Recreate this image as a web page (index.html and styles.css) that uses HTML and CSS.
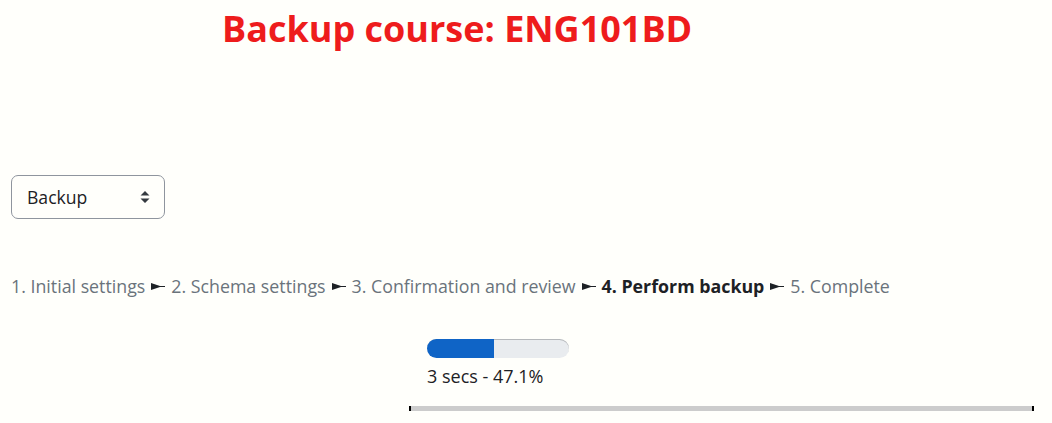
FILE: index.html
```html
<!DOCTYPE html>
<html lang="en">
<head>
<meta charset="utf-8">
<title>Backup course: ENG101BD</title>
<link rel="stylesheet" href="styles.css">
</head>
<body>
<div class="page">
  <h2 class="title">Backup course: ENG101BD</h2>
  <div class="selector">
    <div class="select">
      <span>Backup</span>
      <svg class="caret" width="10" height="14" viewBox="0 0 10 14"><path d="M5 1 L9.5 5.5 H0.5 Z M5 13 L0.5 8.5 H9.5 Z" fill="#343a40"/></svg>
    </div>
  </div>
  <div class="steps">
    <span class="step">1. Initial settings</span>
    <svg class="sep" width="14" height="7" viewBox="0 0 14 7"><path d="M0 0 L9 3 H14 V4 H9 L0 7 Z" fill="#1d2125"/></svg>
    <span class="step">2. Schema settings</span>
    <svg class="sep" width="14" height="7" viewBox="0 0 14 7"><path d="M0 0 L9 3 H14 V4 H9 L0 7 Z" fill="#1d2125"/></svg>
    <span class="step">3. Confirmation and review</span>
    <svg class="sep" width="14" height="7" viewBox="0 0 14 7"><path d="M0 0 L9 3 H14 V4 H9 L0 7 Z" fill="#1d2125"/></svg>
    <span class="step current">4. Perform backup</span>
    <svg class="sep" width="14" height="7" viewBox="0 0 14 7"><path d="M0 0 L9 3 H14 V4 H9 L0 7 Z" fill="#1d2125"/></svg>
    <span class="step">5. Complete</span>
  </div>
  <div class="progress-area">
    <div class="progress"><div class="fill" style="width:47.1%"></div></div>
    <div class="status">3 secs - 47.1%</div>
  </div>
  <div class="rule-wrap"><div class="rule"></div></div>
</div>
</body>
</html>
```
FILE: styles.css
```css
html, body {
  margin: 0;
  padding: 0;
  background: #fffffb;
}
body {
  font-family: "Open Sans", "Noto Sans", sans-serif;
  color: #1d2125;
}
.page {
  padding: 0 0 0 11px;
}
.title {
  margin: 0;
  padding: 4px 0 0 211px;
  font-size: 36px;
  line-height: 50px;
  font-weight: 700;
  color: #ee1c1c;
}
.selector {
  margin-top: 121px;
}
.select {
  box-sizing: border-box;
  width: 154px;
  height: 44px;
  border: 1px solid #8f959e;
  border-radius: 7px;
  display: flex;
  align-items: center;
  justify-content: space-between;
  padding: 0 14px 0 15px;
  font-size: 17.6px;
  color: #1d2125;
}
.caret { display: block; }
.steps {
  margin-top: 53px;
  display: flex;
  align-items: center;
  gap: 6px;
  font-size: 17.8px;
  line-height: 28px;
  color: #6a737b;
  white-space: nowrap;
}
.step.current {
  font-weight: 700;
  color: #1d2125;
}
.sep { display: block; margin-top: 1px; }
.progress-area {
  margin: 39px 0 0 416px;
}
.progress {
  width: 142px;
  height: 19px;
  border-radius: 10px;
  background: #e9ecef;
  box-shadow: inset 0 1px 0 #b5b8bb;
  overflow: hidden;
}
.fill {
  height: 100%;
  background: #0f64c6;
}
.status {
  font-size: 18px;
  line-height: 26px;
  margin-top: 5px;
  color: #1d2125;
}
.rule-wrap {
  margin: 17px 0 0 398px;
  width: 625px;
}
.rule {
  height: 5px;
  background: #cccccc;
  border-left: 2px solid #000;
  border-right: 2px solid #000;
}
```
